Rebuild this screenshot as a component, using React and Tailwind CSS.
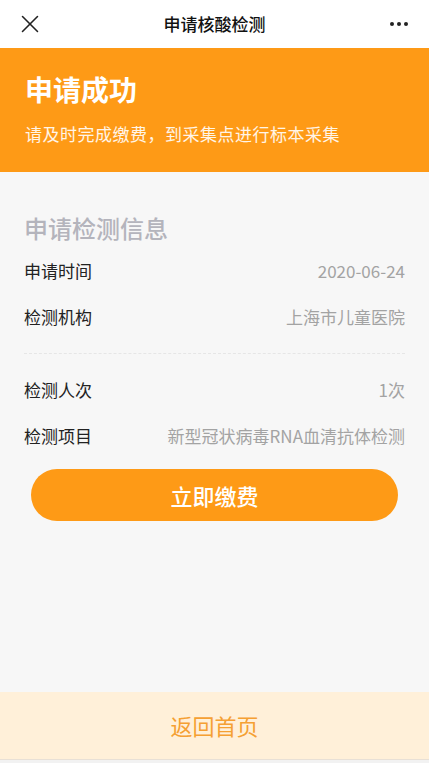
import { X } from 'lucide-react'

const font = { fontFamily: '"Noto Sans CJK SC", "Noto Sans", sans-serif' }

function InfoRow({ label, value }) {
  return (
    <div className="flex items-center justify-between h-[46px]">
      <span className="text-[17px] text-[#222]">{label}</span>
      <span className="text-[17px] text-[#a3a3a3]">{value}</span>
    </div>
  )
}

export default function App() {
  return (
    <div className="w-[429px] h-[763px] flex flex-col bg-[#f7f7f7]" style={font}>
      {/* nav bar */}
      <div className="h-[48px] bg-white flex items-center justify-between pl-[15px] pr-[20px] shrink-0">
        <X size={30} strokeWidth={1.25} className="text-[#222]" />
        <span className="text-[17px] font-medium text-[#111] ml-[-6px]">申请核酸检测</span>
        <div className="flex gap-[3px] items-center pr-[1px]">
          <span className="w-[4px] h-[4px] rounded-full bg-[#222]" />
          <span className="w-[4px] h-[4px] rounded-full bg-[#222]" />
          <span className="w-[4px] h-[4px] rounded-full bg-[#222]" />
        </div>
      </div>

      {/* success banner */}
      <div className="h-[124px] bg-[#fe9a16] px-[25px] pt-[23px] shrink-0">
        <div className="text-[28px] font-bold text-white leading-[36px]">申请成功</div>
        <div className="text-[17px] text-white/90 mt-[15px] leading-[24px] tracking-[0.5px]">请及时完成缴费，到采集点进行标本采集</div>
      </div>

      {/* info */}
      <div className="flex-1 px-[24px] pt-[40px]">
        <div className="text-[24px] font-medium text-[#b4b4bc] leading-[32px] mb-[4px]">申请检测信息</div>
        <InfoRow label="申请时间" value="2020-06-24" />
        <InfoRow label="检测机构" value="上海市儿童医院" />
        <div className="border-t border-dashed border-[#e6e6e6] my-[13px]" />
        <InfoRow label="检测人次" value="1次" />
        <InfoRow label="检测项目" value="新型冠状病毒RNA血清抗体检测" />
        <button className="mt-[10px] mx-[7px] w-[367px] h-[52px] rounded-full bg-[#fe9a16] text-white text-[22px] font-medium">
          立即缴费
        </button>
      </div>

      {/* bottom */}
      <div className="h-[67px] bg-[#fff0d9] flex items-center justify-center shrink-0">
        <span className="text-[22px] text-[#f5a033]">返回首页</span>
      </div>
      <div className="h-[4px] bg-[#f2f2f2] border-t border-[#e8e0d6] shrink-0" />
    </div>
  )
}
